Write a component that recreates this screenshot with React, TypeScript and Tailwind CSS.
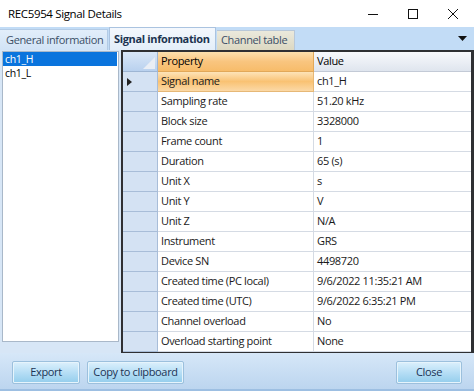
import { FC } from 'react';

const rows: [string, string][] = [
  ['Signal name', 'ch1_H'],
  ['Sampling rate', '51.20 kHz'],
  ['Block size', '3328000'],
  ['Frame count', '1'],
  ['Duration', '65 (s)'],
  ['Unit X', 's'],
  ['Unit Y', 'V'],
  ['Unit Z', 'N/A'],
  ['Instrument', 'GRS'],
  ['Device SN', '4498720'],
  ['Created time (PC local)', '9/6/2022 11:35:21 AM'],
  ['Created time (UTC)', '9/6/2022 6:35:21 PM'],
  ['Channel overload', 'No'],
  ['Overload starting point', 'None'],
];

const Button: FC<{ label: string; className?: string }> = ({ label, className }) => (
  <button
    className={`h-[23px] border border-[#9cc0dd] rounded-[2px] bg-gradient-to-b from-[#dcf0fc] via-[#b6def5] to-[#93cdec] text-[#1b3454] shadow-[inset_0_0_0_1px_#e6f4fc] ${className ?? ''}`}
  >
    {label}
  </button>
);

export default function App() {
  return (
    <div className="w-[474px] h-[391px] flex flex-col font-['Open_Sans',sans-serif] text-[11px] tracking-[-0.35px] text-[#1a1a1a] overflow-hidden bg-white whitespace-nowrap">
      {/* title bar */}
      <div className="h-[27px] flex items-center bg-white relative">
        <span className="ml-[8px] text-[11.5px] text-black">REC5954 Signal Details</span>
        <div className="ml-auto flex items-center h-full">
          <svg width="12" height="12" viewBox="0 0 12 12" className="mr-[28px]">
            <line x1="1" y1="6.5" x2="11" y2="6.5" stroke="#111" strokeWidth="1" />
          </svg>
          <svg width="12" height="12" viewBox="0 0 12 12" className="mr-[28px]">
            <rect x="1.5" y="1.5" width="9" height="9" fill="none" stroke="#111" strokeWidth="1" />
          </svg>
          <svg width="12" height="12" viewBox="0 0 12 12" className="mr-[15px]">
            <path d="M1 1 L11 11 M11 1 L1 11" stroke="#111" strokeWidth="1" />
          </svg>
        </div>
      </div>

      {/* tab strip */}
      <div className="h-[23px] flex items-end bg-[#c2dcf6] relative">
        <div className="w-[108px] h-[21px] flex items-center pl-[6px] bg-gradient-to-b from-[#e2eefa] to-[#d1e3f6] border-t border-r border-[#b3cbe5] text-[#3b4e66]">
          General information
        </div>
        <div className="w-[107px] h-[23px] ml-[1px] flex items-center pl-[4px] bg-gradient-to-b from-[#f4f8fd] to-[#e3eef9] border border-b-0 border-[#aac3e0] font-bold text-[#1c3350]">
          Signal information
        </div>
        <div className="w-[78px] h-[20px] ml-[1px] flex items-center pl-[4px] bg-gradient-to-b from-[#ebe9dc] to-[#dcd8c2] border-t border-r border-[#b8c7d8] text-[#3b4e66]">
          Channel table
        </div>
        <svg width="9" height="6" viewBox="0 0 9 6" className="absolute right-[7px] top-[9px]">
          <path d="M0 0 H9 L4.5 5 Z" fill="#111" />
        </svg>
      </div>

      {/* content */}
      <div className="h-[303px] flex bg-[#d7e6f6]">
        <div className="w-[117px] h-[291px] ml-[2px] mt-[1px] bg-white border border-[#a9b8c9] text-[10.5px]">
          <div className="h-[14px] leading-[14px] pl-[2px] mr-[1px] bg-[#0a74dd] text-white">ch1_H</div>
          <div className="h-[14px] leading-[14px] pl-[2px] text-black">ch1_L</div>
        </div>
        <div className="w-[353px] ml-[2px] border-l-2 border-t-2 border-b border-r-[3px] border-[#2f3033] bg-white flex flex-col">
          <div className="h-[20px] flex">
            <div className="w-[35px] h-full relative bg-gradient-to-b from-[#d9e7f8] to-[#b9d1ee] border-r border-b border-[#9eb6d4]">
              <svg width="12" height="12" viewBox="0 0 12 12" className="absolute right-[2px] bottom-[2px]">
                <path d="M12 0 V12 H0 Z" fill="#e9eef5" />
              </svg>
            </div>
            <div className="w-[156px] h-full flex items-center pl-[3px] bg-gradient-to-b from-[#fde0ad] via-[#f9c57f] to-[#f7bc6a] border-r border-b border-[#e2a859] text-black">
              Property
            </div>
            <div className="flex-1 h-full flex items-center pl-[3px] bg-gradient-to-b from-[#f8f9fc] to-[#dfe5ee] border-b border-[#c3cad6] text-black">
              Value
            </div>
          </div>
          {rows.map(([k, v], i) => (
            <div key={k} className="h-[20px] flex">
              <div className="w-[35px] h-full flex items-center pl-[4px] bg-[#d4e2f3] border-r border-b border-[#a8bdd8]">
                {i === 0 && (
                  <svg width="5" height="8" viewBox="0 0 5 8">
                    <path d="M0 0 L5 4 L0 8 Z" fill="#222" />
                  </svg>
                )}
              </div>
              <div
                className={`w-[156px] h-full flex items-center pl-[3px] border-r border-b border-[#d5dbe4] ${
                  i === 0 ? 'bg-gradient-to-b from-[#fde3b8] via-[#f9c273] to-[#fbd9a6] border-[#e6b877]' : 'bg-white'
                }`}
              >
                {k}
              </div>
              <div className="flex-1 h-full flex items-center pl-[3px] border-b border-[#d5dbe4] bg-white">
                {v}
              </div>
            </div>
          ))}
        </div>
      </div>

      {/* bottom bar */}
      <div className="h-[38px] flex items-start pt-[8px] bg-gradient-to-b from-[#d6e7f8] to-[#bcd5ef] border-b-2 border-[#9dbfe2]">
        <Button label="Export" className="ml-[12px] w-[68px]" />
        <Button label="Copy to clipboard" className="ml-[7px] w-[97px]" />
        <Button label="Close" className="ml-auto mr-[12px] w-[66px]" />
      </div>
    </div>
  );
}
